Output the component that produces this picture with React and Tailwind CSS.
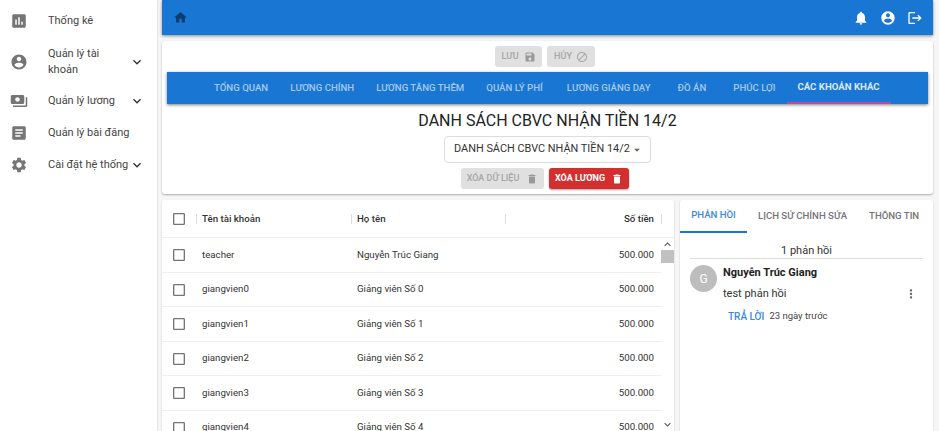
import React from 'react';

const paths = {
  home: 'M10 20v-6h4v6h5v-8h3L12 3 2 12h3v8z',
  bell: 'M12 22c1.1 0 2-.9 2-2h-4c0 1.1.89 2 2 2zm6-6v-5c0-3.07-1.64-5.64-4.5-6.32V4c0-.83-.67-1.5-1.5-1.5s-1.5.67-1.5 1.5v.68C7.63 5.36 6 7.92 6 11v5l-2 2v1h16v-1l-2-2z',
  account: 'M12 2C6.48 2 2 6.48 2 12s4.48 10 10 10 10-4.48 10-10S17.52 2 12 2zm0 3c1.66 0 3 1.34 3 3s-1.34 3-3 3-3-1.34-3-3 1.34-3 3-3zm0 14.2c-2.5 0-4.71-1.28-6-3.22.03-1.99 4-3.08 6-3.08 1.99 0 5.97 1.09 6 3.08-1.29 1.94-3.5 3.22-6 3.22z',
  logout: 'M17 7l-1.41 1.41L18.17 11H8v2h10.17l-2.58 2.58L17 17l5-5zM4 5h8V3H4c-1.1 0-2 .9-2 2v14c0 1.1.9 2 2 2h8v-2H4V5z',
  chart: 'M19 3H5c-1.1 0-2 .9-2 2v14c0 1.1.9 2 2 2h14c1.1 0 2-.9 2-2V5c0-1.1-.9-2-2-2zM9 17H7v-7h2v7zm4 0h-2V7h2v10zm4 0h-2v-4h2v4z',
  payments: 'M19 14V6c0-1.1-.9-2-2-2H3c-1.1 0-2 .9-2 2v8c0 1.1.9 2 2 2h14c1.1 0 2-.9 2-2zm-9-1c-1.66 0-3-1.34-3-3s1.34-3 3-3 3 1.34 3 3-1.34 3-3 3zm13-6v11c0 1.1-.9 2-2 2H4v-2h17V7h2z',
  article: 'M19 3H5c-1.1 0-2 .9-2 2v14c0 1.1.9 2 2 2h14c1.1 0 2-.9 2-2V5c0-1.1-.9-2-2-2zm-5 14H7v-2h7v2zm3-4H7v-2h10v2zm0-4H7V7h10v2z',
  settings: 'M19.14 12.94c.04-.3.06-.61.06-.94 0-.32-.02-.64-.07-.94l2.03-1.58c.18-.14.23-.41.12-.61l-1.92-3.32c-.12-.22-.37-.29-.59-.22l-2.39.96c-.5-.38-1.03-.7-1.62-.94l-.36-2.54c-.04-.24-.24-.41-.48-.41h-3.84c-.24 0-.43.17-.47.41l-.36 2.54c-.59.24-1.13.57-1.62.94l-2.39-.96c-.22-.08-.47 0-.59.22L2.74 8.87c-.12.21-.08.47.12.61l2.03 1.58c-.05.3-.09.63-.09.94s.02.64.07.94l-2.03 1.58c-.18.14-.23.41-.12.61l1.92 3.32c.12.22.37.29.59.22l2.39-.96c.5.38 1.03.7 1.62.94l.36 2.54c.05.24.24.41.48.41h3.84c.24 0 .44-.17.47-.41l.36-2.54c.59-.24 1.13-.56 1.62-.94l2.39.96c.22.08.47 0 .59-.22l1.92-3.32c.12-.22.07-.47-.12-.61l-2.01-1.58zM12 15.6c-1.98 0-3.6-1.62-3.6-3.6s1.62-3.6 3.6-3.6 3.6 1.62 3.6 3.6-1.62 3.6-3.6 3.6z',
  expand: 'M16.59 8.59 12 13.17 7.41 8.59 6 10l6 6 6-6z',
  collapse: 'M12 8l-6 6 1.41 1.41L12 10.83l4.59 4.58L18 14z',
  save: 'M17 3H5c-1.11 0-2 .9-2 2v14c0 1.1.89 2 2 2h14c1.1 0 2-.9 2-2V7l-4-4zm-5 16c-1.66 0-3-1.34-3-3s1.34-3 3-3 3 1.34 3 3-1.34 3-3 3zm3-10H5V5h10v4z',
  block: 'M12 2C6.48 2 2 6.48 2 12s4.48 10 10 10 10-4.48 10-10S17.52 2 12 2zM4 12c0-4.42 3.58-8 8-8 1.85 0 3.55.63 4.9 1.69L5.69 16.9C4.63 15.55 4 13.85 4 12zm8 8c-1.85 0-3.55-.63-4.9-1.69L18.31 7.1C19.37 8.45 20 10.15 20 12c0 4.42-3.58 8-8 8z',
  trash: 'M6 19c0 1.1.9 2 2 2h8c1.1 0 2-.9 2-2V7H6v12zM19 4h-3.5l-1-1h-5l-1 1H5v2h14V4z',
  more: 'M12 8c1.1 0 2-.9 2-2s-.9-2-2-2-2 .9-2 2 .9 2 2 2zm0 2c-1.1 0-2 .9-2 2s.9 2 2 2 2-.9 2-2-.9-2-2-2zm0 6c-1.1 0-2 .9-2 2s.9 2 2 2 2-.9 2-2-.9-2-2-2z',
  check: 'M19 5v14H5V5h14m0-2H5c-1.1 0-2 .9-2 2v14c0 1.1.9 2 2 2h14c1.1 0 2-.9 2-2V5c0-1.1-.9-2-2-2z',
  drop: 'M7 10l5 5 5-5z',
};

function Icon({ name, className }) {
  return (
    <svg viewBox="0 0 24 24" fill="currentColor" className={className}>
      <path d={paths[name]} />
    </svg>
  );
}

const menu = [
  { icon: 'chart', label: 'Thống kê', h: 'h-[40px]' },
  { icon: 'account', label: 'Quản lý tài khoản', arrow: true, h: 'h-[41px]' },
  { icon: 'payments', label: 'Quản lý lương', arrow: true, h: 'h-[38px]' },
  { icon: 'article', label: 'Quản lý bài đăng', h: 'h-[26px]' },
  { icon: 'settings', label: 'Cài đặt hệ thống', arrow: true, h: 'h-[38px]' },
];

const tabs = [
  { label: 'TỔNG QUAN', cls: 'px-[11px]' },
  { label: 'LƯƠNG CHÍNH', cls: 'px-[11px]' },
  { label: 'LƯƠNG TĂNG THÊM', cls: 'px-[11px]' },
  { label: 'QUẢN LÝ PHÍ', cls: 'pl-[11px] pr-[13px]' },
  { label: 'LƯƠNG GIẢNG DẠY', cls: 'px-[11px]' },
  { label: 'ĐỒ ÁN', cls: 'pl-[16px] pr-[16px]' },
  { label: 'PHÚC LỢI', cls: 'px-[11px]' },
];

const rows = [
  ['teacher', 'Nguyễn Trúc Giang'],
  ['giangvien0', 'Giảng viên Số 0'],
  ['giangvien1', 'Giảng viên Số 1'],
  ['giangvien2', 'Giảng viên Số 2'],
  ['giangvien3', 'Giảng viên Số 3'],
  ['giangvien4', 'Giảng viên Số 4'],
];

function Sidebar() {
  return (
    <aside className="w-[158px] shrink-0 bg-white border-r border-[#e4e4e4] pt-[1px]">
      {menu.map((m) => (
        <div key={m.label} className={`flex items-center pl-[10px] pr-[12px] ${m.h}`}>
          <Icon name={m.icon} className="w-[18px] h-[18px] text-[#757575] shrink-0" />
          <span className="ml-[20px] flex-1 text-[11px] leading-[15.5px] text-[#444]">{m.label}</span>
          {m.arrow && <Icon name="expand" className="w-[16px] h-[16px] text-[#333] shrink-0" />}
        </div>
      ))}
    </aside>
  );
}

function TopCard() {
  return (
    <section className="mt-[6px] h-[153px] bg-white rounded-[3px] shadow-[0_1px_2px_rgba(0,0,0,0.3)] flex flex-col items-center px-[5px]">
      <div className="flex gap-[5px] pt-[5px] mr-[5px]">
        <button className="h-[21px] w-[47px] rounded-[3px] bg-[#e0e0e0] text-[#a6a6a6] text-[9px] font-medium flex items-center justify-center gap-[5px]">
          LƯU <Icon name="save" className="w-[12px] h-[12px] text-[#999]" />
        </button>
        <button className="h-[21px] w-[48px] rounded-[3px] bg-[#e0e0e0] text-[#a6a6a6] text-[9px] font-medium flex items-center justify-center gap-[4px]">
          HỦY <Icon name="block" className="w-[12px] h-[12px] text-[#a6a6a6]" />
        </button>
      </div>
      <nav className="mt-[5px] w-full h-[32px] shrink-0 bg-[#1976d2] shadow-[0_1px_3px_rgba(0,0,0,0.5)] flex items-stretch pl-[36px] text-[9.65px] font-medium">
        {tabs.map((t) => (
          <div key={t.label} className={`flex items-center justify-center text-[#a5c8ec] ${t.cls}`}>
            {t.label}
          </div>
        ))}
        <div className="w-[104px] flex items-center justify-center text-[#dbe8f6] font-bold border-b-2 border-[#c2489f]">
          CÁC KHOẢN KHÁC
        </div>
      </nav>
      <h1 className="mt-[6px] text-[16px] leading-[21px] text-[#222]">DANH SÁCH CBVC NHẬN TIỀN 14/2</h1>
      <button className="mt-[5px] h-[27px] w-[207px] shrink-0 bg-white border border-[#dcdcdc] rounded-[4px] flex items-center pl-[9px] text-[10.9px] text-[#333]">
        DANH SÁCH CBVC NHẬN TIỀN 14/2
        <Icon name="drop" className="w-[14px] h-[14px] text-[#666]" />
      </button>
      <div className="mt-[5px] mr-[5px] flex gap-[5px]">
        <button className="h-[21px] w-[83px] rounded-[3px] bg-[#e0e0e0] text-[#a6a6a6] text-[9px] font-medium flex items-center justify-center gap-[7px]">
          XÓA DỮ LIỆU <Icon name="trash" className="w-[12px] h-[12px] text-[#999]" />
        </button>
        <button className="h-[21px] w-[80px] rounded-[3px] bg-[#d32f2f] text-white text-[9px] font-bold flex items-center justify-center gap-[6px] shadow-[0_1px_2px_rgba(0,0,0,0.35)]">
          XÓA LƯƠNG <Icon name="trash" className="w-[12px] h-[12px]" />
        </button>
      </div>
    </section>
  );
}

function Sep() {
  return <span className="w-px h-[10px] bg-[#dcdcdc] shrink-0" />;
}

function Table() {
  return (
    <section className="w-[512px] shrink-0 bg-white rounded-t-[3px] shadow-[0_1px_2px_rgba(0,0,0,0.2)] flex flex-col overflow-hidden">
      <div className="h-[38px] pt-[1px] shrink-0 flex items-center border-b border-[#eeeeee] text-[9.7px] font-medium text-[#333]">
        <div className="w-[35px] pl-[9px] flex items-center justify-between">
          <Icon name="check" className="w-[16px] h-[16px] text-[#757575]" />
          <Sep />
        </div>
        <div className="ml-[5px] w-[149px]">Tên tài khoản</div>
        <Sep />
        <div className="ml-[5px] w-[148px]">Họ tên</div>
        <Sep />
        <div className="flex-1 text-right pr-[7px]">Số tiền</div>
        <Sep />
        <div className="w-[12px]" />
      </div>
      <div className="flex flex-1 min-h-0">
        <div className="flex-1 min-w-0">
          {rows.map((r) => (
            <div key={r[0]} className="h-[34.5px] pt-[1px] flex items-center border-b border-[#eeeeee] text-[9.7px] text-[#333]">
              <div className="w-[40px] pl-[9px]">
                <Icon name="check" className="w-[16px] h-[16px] text-[#757575]" />
              </div>
              <div className="w-[155px]">{r[0]}</div>
              <div className="flex-1">{r[1]}</div>
              <div className="pr-[7px]">500.000</div>
            </div>
          ))}
        </div>
        <div className="w-[13px] shrink-0 flex flex-col">
          <Icon name="collapse" className="w-[13px] h-[13px] text-[#555]" />
          <div className="mt-[-1px] h-[13px] bg-[#c1c1c1]" />
          <div className="flex-1" />
          <Icon name="expand" className="w-[13px] h-[13px] text-[#555]" />
        </div>
      </div>
    </section>
  );
}

function Feedback() {
  return (
    <section className="flex-1 bg-white rounded-t-[3px] shadow-[0_1px_2px_rgba(0,0,0,0.2)] flex flex-col">
      <div className="h-[33px] shrink-0 flex items-stretch text-[9.6px] font-medium">
        <div className="w-[67px] flex items-center justify-center text-[#3b8ad9] border-b-[2px] border-[#1976d2]">PHẢN HỒI</div>
        <div className="ml-[11px] flex items-center text-[#757575]">LỊCH SỬ CHỈNH SỬA</div>
        <div className="ml-[22px] flex items-center text-[#757575]">THÔNG TIN</div>
      </div>
      <div className="mx-[10px] w-[233px] mt-[10px] h-[16px] border-b border-[#dedede] text-center text-[11px] leading-[15px] text-[#333]">
        1 phản hồi
      </div>
      <div className="mx-[10px] mt-[6px] flex">
        <div className="w-[27px] h-[27px] rounded-full bg-[#bdbdbd] text-white text-[12px] flex items-center justify-center shrink-0">G</div>
        <div className="ml-[6px] flex-1 pt-[1px]">
          <div className="text-[11px] leading-[14px] font-bold text-[#222]">Nguyễn Trúc Giang</div>
          <div className="mt-[6px] flex items-center justify-between pr-[5px] text-[11px] text-[#333]">
            test phản hồi
            <Icon name="more" className="w-[14px] h-[14px] text-[#666]" />
          </div>
          <div className="mt-[6px] pl-[5px] flex items-center gap-[5px] text-[10px]">
            <span className="text-[#3b8ad9] font-medium">TRẢ LỜI</span>
            <span className="text-[#444] text-[9.5px]">23 ngày trước</span>
          </div>
        </div>
      </div>
    </section>
  );
}

export default function App() {
  return (
    <div className="w-[939px] h-[431px] overflow-hidden flex bg-[#f6f6f6] font-['Roboto',sans-serif]">
      <Sidebar />
      <main className="flex-1 min-w-0 pl-[4px] pr-[6px] flex flex-col">
        <header className="h-[35px] shrink-0 bg-[#1976d2] shadow-[0_1px_3px_rgba(0,0,0,0.45)] flex items-center pl-[11px] pr-[10px]">
          <Icon name="home" className="w-[15px] h-[15px] text-[#0d3c70]" />
          <div className="ml-auto flex items-center gap-[11px] text-white">
            <Icon name="bell" className="w-[16px] h-[16px]" />
            <Icon name="account" className="w-[16px] h-[16px]" />
            <Icon name="logout" className="w-[16px] h-[16px]" />
          </div>
        </header>
        <TopCard />
        <div className="mt-[6px] flex-1 min-h-0 flex gap-[6px]">
          <Table />
          <Feedback />
        </div>
      </main>
    </div>
  );
}
